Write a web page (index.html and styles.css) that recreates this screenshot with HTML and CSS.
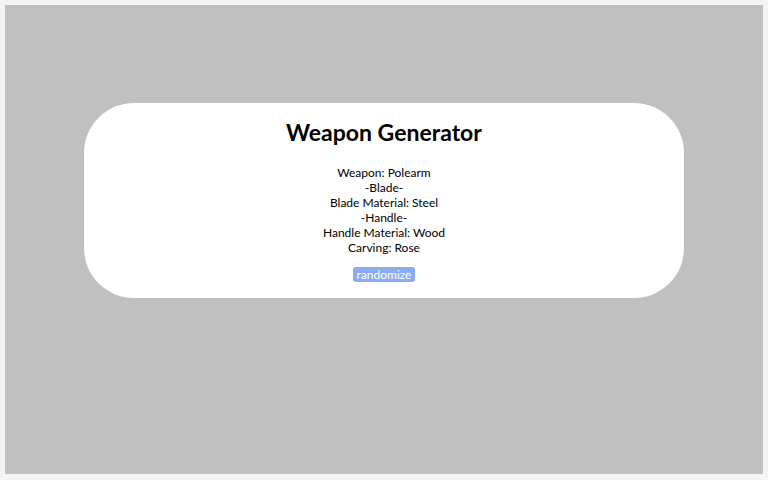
FILE: index.html
```html
<!DOCTYPE html>
<html lang="en">
<head>
  <meta charset="UTF-8">
  <title>Weapon Generator</title>
  <link rel="stylesheet" href="styles.css">
</head>
<body>
  <div class="stage">
    <div class="card">
      <h1>Weapon Generator</h1>
      <div class="weapon" id="weapon">
        <p>Weapon: <span id="type">Polearm</span></p>
        <p>-Blade-</p>
        <p>Blade Material: <span id="blade">Steel</span></p>
        <p>-Handle-</p>
        <p>Handle Material: <span id="handle">Wood</span></p>
        <p>Carving: <span id="carving">Rose</span></p>
      </div>
      <button onclick="randomize()">randomize</button>
    </div>
  </div>

  <script>
    const types = ['Sword', 'Axe', 'Polearm', 'Dagger', 'Mace'];
    const blades = ['Steel', 'Iron', 'Bronze', 'Obsidian'];
    const handles = ['Wood', 'Bone', 'Leather', 'Ivory'];
    const carvings = ['Rose', 'Dragon', 'Wolf', 'Skull', 'None'];

    function pick(list) {
      return list[Math.floor(Math.random() * list.length)];
    }

    function randomize() {
      document.getElementById('type').textContent = pick(types);
      document.getElementById('blade').textContent = pick(blades);
      document.getElementById('handle').textContent = pick(handles);
      document.getElementById('carving').textContent = pick(carvings);
    }
  </script>
</body>
</html>
```

FILE: styles.css
```css
* {
  box-sizing: border-box;
}

html, body {
  height: 100%;
}

body {
  margin: 0;
  padding: 5px;
  background: #f4f4f4;
  font-family: Lato, sans-serif;
  color: #000;
}

.stage {
  height: 469px;
  width: 758px;
  background: #c0c0c0;
  padding-top: 98px;
}

.card {
  width: 600px;
  margin: 0 auto;
  background: #fff;
  border-radius: 50px;
  text-align: center;
  padding: 14px 0 16px;
}

h1 {
  margin: 0 0 18px;
  font-size: 23px;
  line-height: 30px;
  font-weight: bold;
}

.weapon p {
  margin: 0;
  font-size: 12px;
  line-height: 15px;
}

button {
  margin-top: 12px;
  padding: 0 4px;
  height: 15px;
  line-height: 15px;
  font-family: Lato, sans-serif;
  font-size: 12px;
  color: #fff;
  background-color: #8aacf2;
  border: none;
  border-radius: 3px;
  cursor: pointer;
}
```
